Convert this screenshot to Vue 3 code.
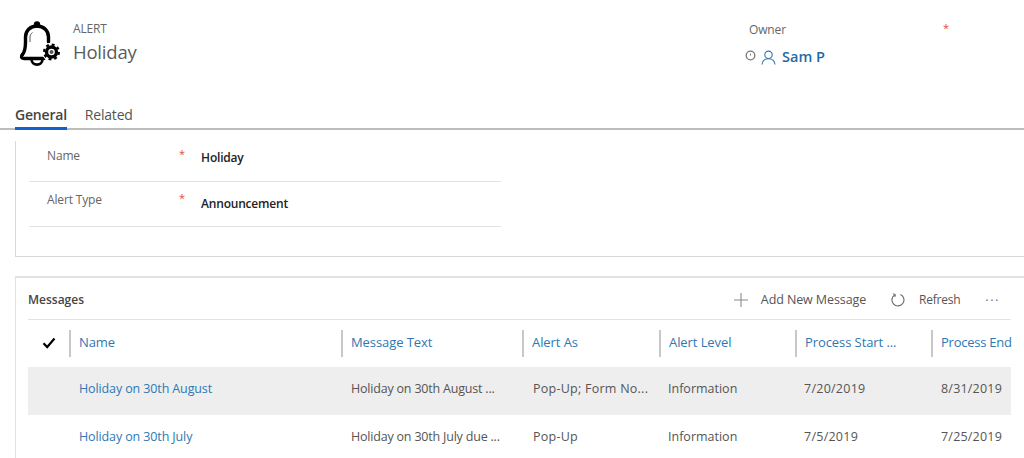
<script setup>
const columns = [
  { label: 'Name', width: 272 },
  { label: 'Message Text', width: 181 },
  { label: 'Alert As', width: 137 },
  { label: 'Alert Level', width: 136 },
  { label: 'Process Start ...', width: 136 },
  { label: 'Process End', width: 80 }
]
const rows = [
  { cells: ['Holiday on 30th August', 'Holiday on 30th August ...', 'Pop-Up; Form No...', 'Information', '7/20/2019', '8/31/2019'], shaded: true },
  { cells: ['Holiday on 30th July', 'Holiday on 30th July due ...', 'Pop-Up', 'Information', '7/5/2019', '7/25/2019'], shaded: false }
]
</script>

<template>
  <div class="page">
    <header class="head">
      <div class="entity">
        <svg class="bell" width="46" height="48" viewBox="0 0 46 48" fill="none">
          <circle cx="18" cy="4.500" r="3.200" fill="#000" />
          <path d="M3.500 34.500c2.500-3 3-7 3-12.500v-5C6.500 11 11 6 18 6s11.500 5 11.500 11v5" stroke="#000" stroke-width="3.400" stroke-linecap="round" />
          <path d="M3.500 34.500c-2 1.800-1.200 4 1.500 4H25" stroke="#000" stroke-width="3.400" stroke-linecap="round" />
          <path d="M12.500 39c0 7.500 11 7.500 11 0" stroke="#000" stroke-width="2.600" />
          <path d="M11 22v-5c0-2 1-3.500 2.500-4.500" stroke="#555" stroke-width="1" />
          <circle cx="32.500" cy="32" r="9.500" fill="#fff" />
          <circle cx="32.500" cy="32" r="5" stroke="#000" stroke-width="3.400" />
          <circle cx="32.500" cy="32" r="7.400" stroke="#000" stroke-width="2.200" stroke-dasharray="2.900 2.910" />
          <circle cx="32.500" cy="32" r="2" fill="#555" />
        </svg>
        <div>
          <div class="kind">ALERT</div>
          <div class="title">Holiday</div>
        </div>
      </div>
      <div class="owner">
        <div class="owner-top"><span>Owner</span><span class="req owner-req">*</span></div>
        <div class="owner-value">
          <svg class="clock" width="11" height="11" viewBox="0 0 11 11" fill="none">
            <circle cx="5.500" cy="5.500" r="4.300" stroke="#777" stroke-width="1.300" />
            <path d="M5.500 3.500v2.200" stroke="#888" />
          </svg>
          <svg class="person" width="15" height="15" viewBox="0 0 15 15" fill="none">
            <circle cx="7.500" cy="4.800" r="3.700" stroke="#2f78b3" stroke-width="1.100" />
            <path d="M1 14.500c.4-3.600 3-5.800 6.500-5.800s6.100 2.200 6.500 5.800" stroke="#2f78b3" stroke-width="1.100" />
          </svg>
          <a class="owner-name">Sam P</a>
        </div>
      </div>
    </header>

    <nav class="tabs">
      <span class="tab active">General</span>
      <span class="tab">Related</span>
    </nav>

    <section class="form-card">
      <div class="field name-field">
        <span class="f-label">Name</span><span class="req">*</span><span class="f-value">Holiday</span>
      </div>
      <div class="field type-field">
        <span class="f-label">Alert Type</span><span class="req">*</span><span class="f-value">Announcement</span>
      </div>
    </section>

    <section class="grid-card">
      <div class="grid-bar">
        <span class="grid-title">Messages</span>
        <div class="actions">
          <svg width="14" height="14" viewBox="0 0 14 14" fill="none"><path d="M7 0v14M0 7h14" stroke="#8a8a8a" stroke-width="1.100" /></svg>
          <span class="add">Add New Message</span>
          <svg class="refresh-icon" width="14" height="14" viewBox="0 0 14 14" fill="none"><path d="M4 1.700A6 6 0 1 0 9.500 1.500" stroke="#666" stroke-width="1.100" /><path d="M2 .8l2.400.8-.6 2.400" stroke="#666" stroke-width="1" /></svg>
          <span class="refresh">Refresh</span>
          <span class="more">···</span>
        </div>
      </div>
      <div class="grid-head">
        <div class="check-col">
          <svg width="14" height="12" viewBox="0 0 14 12" fill="none"><path d="M1.500 6.200l3.700 3.800L12.500 1.500" stroke="#000" stroke-width="2.200" /></svg>
        </div>
        <div v-for="c in columns" :key="c.label" class="col-head" :style="{ width: c.width + 'px' }">{{ c.label }}</div>
      </div>
      <div v-for="r in rows" :key="r.cells[0]" class="grid-row" :class="{ shaded: r.shaded }">
        <div class="check-space"></div>
        <div
          v-for="(cell, i) in r.cells"
          :key="i"
          class="cell"
          :class="'c' + i"
          :style="{ width: columns[i].width + 'px' }"
        >{{ cell }}</div>
      </div>
    </section>
  </div>
</template>

<style scoped>
.page {
  width: 1024px;
  height: 458px;
  overflow: hidden;
  background: #fff;
  font-family: "Open Sans", "Liberation Sans", sans-serif;
  color: #555;
}
.head {
  height: 100px;
  display: flex;
  justify-content: space-between;
  box-sizing: border-box;
}
.entity {
  display: flex;
  padding: 20px 0 0 19px;
}
.bell { margin-right: 8px; }
.kind {
  font-size: 12px;
  line-height: 16px;
  margin-top: 1px;
  color: #666;
  letter-spacing: -0.15px;
}
.title {
  font-size: 18.500px;
  line-height: 28px;
  margin-top: 1px;
  color: #5c5c5c;
  letter-spacing: -0.2px;
}
.owner {
  width: 281px;
  padding-top: 21px;
  box-sizing: border-box;
}
.owner-top {
  display: flex;
  font-size: 12px;
  line-height: 18px;
  padding-left: 6px;
  color: #666;
  letter-spacing: -0.15px;
}
.owner-req { margin-left: 157px; margin-top: 0; }
.owner-value {
  display: flex;
  align-items: center;
  margin-top: 8px;
  height: 18px;
}
.clock { margin: -2px 0 0 2px; }
.person { margin: 3px 0 0 5px; }
.owner-name {
  font-size: 14.500px;
  font-weight: 600;
  color: #1f6aa5;
  margin-left: 6px;
  letter-spacing: 0;
}
.req {
  color: #e8483f;
  font-size: 11px;
  line-height: 14px;
}
.tabs {
  height: 30px;
  display: flex;
  box-sizing: border-box;
  border-bottom: 2px solid #bdbdbd;
  padding-left: 15px;
  gap: 18px;
}
.tab {
  height: 30px;
  box-sizing: border-box;
  font-size: 14px;
  line-height: 29px;
  color: #555;
  letter-spacing: -0.2px;
}
.tab.active {
  font-weight: 600;
  color: #444;
  border-bottom: 3px solid #1160d0;
}
.form-card {
  margin: 11px 0 0 15px;
  height: 116px;
  box-sizing: border-box;
  border-left: 1px solid #d8d8d8;
  border-bottom: 1px solid #d8d8d8;
  padding-left: 13px;
}
.field {
  width: 472px;
  display: flex;
  border-bottom: 1px solid #e2e2e2;
  box-sizing: border-box;
}
.name-field { height: 41px; padding-top: 6px; }
.type-field { height: 45px; padding-top: 9px; }
.f-label {
  width: 150px;
  padding-left: 18px;
  box-sizing: border-box;
  font-size: 12px;
  line-height: 18px;
  color: #666;
  letter-spacing: -0.15px;
}
.f-value {
  margin-left: 16px;
  margin-top: 2px;
  font-size: 12px;
  line-height: 18px;
  font-weight: 600;
  color: #222;
  letter-spacing: -0.2px;
}
.type-field .f-value { margin-top: 4px; }
.grid-card {
  margin: 19px 0 0 15px;
  box-sizing: border-box;
  border-left: 1px solid #e2e2e2;
  border-top: 2px solid #e2e2e2;
  padding: 0 13px 0 12px;
  height: 200px;
}
.grid-bar {
  height: 42px;
  padding-top: 2px;
  display: flex;
  align-items: center;
  justify-content: space-between;
  border-bottom: 1px solid #e2e2e2;
  box-sizing: border-box;
}
.grid-title {
  font-size: 12px;
  font-weight: 600;
  color: #444;
}
.actions {
  display: flex;
  align-items: center;
  font-size: 12px;
  color: #555;
  letter-spacing: -0.25px;
}
.add { margin-left: 13px; font-size: 12.500px; letter-spacing: -0.1px; }
.refresh-icon { margin-left: 25px; }
.refresh { margin-left: 14px; }
.more { margin: 0 11px 0 25px; color: #777; font-size: 13px; letter-spacing: 1.500px; }
.grid-head {
  height: 47px;
  display: flex;
  align-items: center;
}
.check-col {
  width: 41px;
  display: flex;
  justify-content: center;
  padding-bottom: 2px;
  box-sizing: border-box;
}
.check-space { width: 41px; flex: none; }
.col-head {
  height: 27px;
  box-sizing: border-box;
  border-left: 2px solid #c8c8c8;
  padding-left: 8px;
  font-size: 13px;
  line-height: 24px;
  color: #2f78b3;
  white-space: nowrap;
  flex: none;
  letter-spacing: -0.08px;
}
.col-head:last-child { letter-spacing: -0.25px; }
.grid-row {
  height: 48px;
  padding-bottom: 6px;
  box-sizing: border-box;
  display: flex;
  align-items: center;
  width: 983px;
  overflow: hidden;
}
.grid-row.shaded { background: #eeeeee; }
.cell {
  flex: none;
  box-sizing: border-box;
  padding-left: 10px;
  font-size: 12.500px;
  color: #555;
  white-space: nowrap;
  letter-spacing: 0;
}
.cell.c0 {
  color: #2f78b3;
  padding-left: 10px;
  letter-spacing: -0.12px;
}
.cell.c1 { letter-spacing: -0.2px; }
.cell.c2 { padding-left: 11px; letter-spacing: 0.25px; }
.cell.c3 { padding-left: 9px; }
.cell.c4 { padding-left: 9px; letter-spacing: 0.25px; }
.cell.c5 { padding-left: 10px; letter-spacing: 0.2px; }
</style>
